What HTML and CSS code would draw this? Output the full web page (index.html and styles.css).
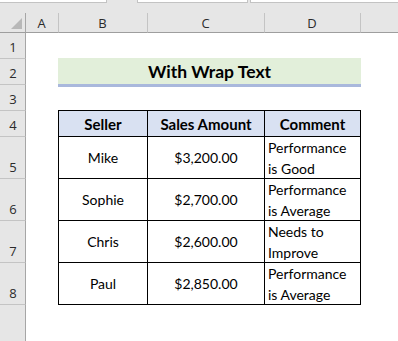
FILE: index.html
```html
<!DOCTYPE html>
<html>
<head>
<meta charset="utf-8">
<link rel="stylesheet" href="styles.css">
</head>
<body>
<div class="app">
  <div class="topbar">
    <div class="tab tab-1"></div>
    <div class="tab tab-2"></div>
    <div class="tab tab-3"></div>
  </div>
  <div class="sheet">
    <div class="corner"><span class="tri"></span></div>
    <div class="colhdr">A</div>
    <div class="colhdr">B</div>
    <div class="colhdr">C</div>
    <div class="colhdr">D</div>
    <div class="colhdr last"></div>

    <div class="rowhdr r1">1</div>
    <div class="rowhdr r2">2</div>
    <div class="rowhdr r3">3</div>
    <div class="rowhdr r4">4</div>
    <div class="rowhdr r5">5</div>
    <div class="rowhdr r6">6</div>
    <div class="rowhdr r7">7</div>
    <div class="rowhdr r8">8</div>
    <div class="rowhdr r9"></div>

    <div class="title">With Wrap Text</div>

    <div class="table">
      <div class="th">Seller</div>
      <div class="th">Sales Amount</div>
      <div class="th">Comment</div>

      <div class="td c">Mike</div>
      <div class="td c">$3,200.00</div>
      <div class="td w">Performance is Good</div>

      <div class="td c">Sophie</div>
      <div class="td c">$2,700.00</div>
      <div class="td w">Performance is Average</div>

      <div class="td c">Chris</div>
      <div class="td c">$2,600.00</div>
      <div class="td w">Needs to Improve</div>

      <div class="td c">Paul</div>
      <div class="td c">$2,850.00</div>
      <div class="td w">Performance is Average</div>
    </div>
  </div>
</div>
</body>
</html>
```

FILE: styles.css
```css
html, body {
  margin: 0;
  padding: 0;
  background: #ffffff;
}

.app {
  width: 398px;
  height: 341px;
  display: flex;
  flex-direction: column;
  overflow: hidden;
  font-family: Lato, "Liberation Sans", sans-serif;
}

.topbar {
  height: 13px;
  flex: none;
  background: #e6e6e6;
  display: flex;
  align-items: flex-start;
}

.tab {
  height: 2px;
  background: #ffffff;
  border: 1px solid #c3c3c3;
  border-top: none;
}

.tab-1 {
  width: 106px;
  border-left: none;
}

.tab-2 {
  width: 109px;
  margin-left: 30px;
}

.tab-3 {
  flex: 1;
  margin-left: 2px;
  border-right: none;
}

.sheet {
  flex: 1;
  display: grid;
  grid-template-columns: 26px 33px 89px 117px 96px 1fr;
  grid-template-rows: 20px 26px 26px 26px 26px 42px 42px 42px 42px 1fr;
  background: #ffffff;
}

.corner {
  grid-column: 1;
  grid-row: 1;
  background: #e6e6e6;
  border-right: 1px solid #a6a6a6;
  border-bottom: 1px solid #9e9e9e;
  position: relative;
}

.tri {
  position: absolute;
  left: 11px;
  top: 5px;
  width: 0;
  height: 0;
  border-style: solid;
  border-width: 0 0 11px 11px;
  border-color: transparent transparent #b8b8b8 transparent;
}

.colhdr {
  grid-row: 1;
  background: #e6e6e6;
  border-right: 1px solid #c4c4c4;
  border-bottom: 1px solid #9e9e9e;
  font-family: "Open Sans", "Noto Sans", sans-serif;
  font-size: 13px;
  color: #2b2b2b;
  display: flex;
  align-items: center;
  justify-content: center;
  padding-right: 1px;
}

.colhdr.last {
  border-right: none;
}

.rowhdr {
  grid-column: 1;
  background: #e6e6e6;
  border-right: 1px solid #a6a6a6;
  border-bottom: 1px solid #c4c4c4;
  font-family: "Open Sans", "Noto Sans", sans-serif;
  font-size: 13px;
  line-height: 16px;
  color: #2b2b2b;
  display: flex;
  align-items: flex-end;
  justify-content: center;
  padding-bottom: 3px;
  padding-left: 1px;
}

.rowhdr.r9 {
  border-bottom: none;
}

.r1 { grid-row: 2; }
.r2 { grid-row: 3; }
.r3 { grid-row: 4; }
.r4 { grid-row: 5; }
.r5 { grid-row: 6; }
.r6 { grid-row: 7; }
.r7 { grid-row: 8; }
.r8 { grid-row: 9; }
.r9 { grid-row: 10; }

.title {
  grid-column: 3 / 6;
  grid-row: 3;
  margin: -1px 0 0 -1px;
  align-self: start;
  height: 25px;
  background: #e2efda;
  border-bottom: 3px solid #a9b8dc;
  font-weight: 700;
  font-size: 17.5px;
  color: #000000;
  display: flex;
  align-items: center;
  justify-content: center;
  padding-top: 1px;
  box-sizing: content-box;
}

.table {
  grid-column: 3 / 6;
  grid-row: 5 / 10;
  margin: -1px 0 0 -1px;
  display: grid;
  grid-template-columns: 88px 116px 95px;
  grid-template-rows: 25px 41px 41px 41px 41px;
  gap: 1px;
  padding: 1px;
  background: #000000;
}

.th {
  background: #d9e1f2;
  font-weight: 700;
  font-size: 15px;
  color: #000000;
  display: flex;
  align-items: center;
  justify-content: center;
}

.td {
  background: #ffffff;
  font-size: 14px;
  color: #000000;
}

.td.c {
  display: flex;
  align-items: center;
  justify-content: center;
}

.td.w {
  padding: 0 2px 0 3px;
  line-height: 21px;
}
```
